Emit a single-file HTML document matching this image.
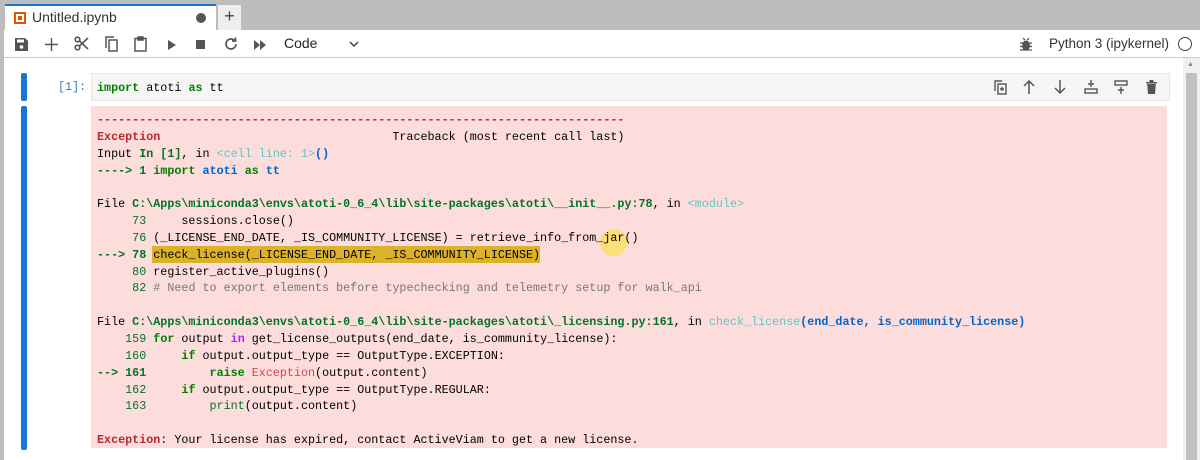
<!DOCTYPE html>
<html><head><meta charset="utf-8"><style>
*{margin:0;padding:0;box-sizing:border-box}
body{width:1200px;height:460px;overflow:hidden;background:#fff;font-family:"Liberation Sans",sans-serif;position:relative}
.abs{position:absolute}
.top{left:0;top:0;width:1200px;height:30px;background:#bdbdbd}
.leftstrip{left:0;top:0;width:4px;height:460px;background:#bdbdbd}
.tab{left:5px;top:4px;width:211px;height:27px;background:#fff;border-top:2px solid #1976d2}
.tab2{left:218px;top:5px;width:23px;height:25px;background:#eee;font-size:18px;color:#444;text-align:center;line-height:22px}
.toolbar{left:4px;top:30px;width:1196px;height:28px;background:#fff;border-bottom:1px solid #ccc}
.ico{position:absolute;color:#555}
.scroll{left:1183px;top:58px;width:17px;height:402px;background:#f0f0f0}
.scrollthumb{left:1186px;top:73px;width:11px;height:387px;background:#c1c1c1}
.bar{background:#1976d2;border-radius:2px;width:6px;left:21px}
pre{font-family:"Liberation Mono",monospace;font-size:11.73px;line-height:16.85px;color:#000;white-space:pre}
.r{color:#b22b31;font-weight:bold}
.g{color:#007427;font-weight:bold}
.gn{color:#007427}
.c{color:#60c6c8}
.b{color:#0065ca;font-weight:bold}
.k{color:#008000;font-weight:bold}
.p{color:#aa22ff;font-weight:bold}
.ex{color:#d44950}
.cm{color:#777}
.hl{background:#dcb22a}
</style></head><body>
<div class="abs top"></div>
<div class="abs leftstrip"></div>
<div class="abs tab">
 <div class="abs" style="left:9px;top:6px;width:12px;height:12px;border:2px solid #e65100;background:#fff"><div style="margin:2px;width:4px;height:4px;background:#e65100"></div></div>
 <div class="abs" style="left:27px;top:3px;font-size:14px;color:#333">Untitled.ipynb</div>
 <div class="abs" style="left:191px;top:7px;width:10px;height:10px;border-radius:50%;background:#555"></div>
</div>
<div class="abs tab2">+</div>
<div class="abs toolbar">
 <svg class="ico" style="left:11px;top:8px" width="13" height="13" viewBox="0 0 13 13"><path d="M0 0h10l3 3v10H0z" fill="#555"/><rect x="2" y="1.5" width="7" height="3" fill="#fff"/><circle cx="6.5" cy="9" r="1.8" fill="#fff"/></svg>
 <svg class="ico" style="left:41px;top:8px" width="13" height="13"><path d="M6.5 0v13M0 6.5h13" stroke="#555" stroke-width="1.4"/></svg>
 <svg class="ico" style="left:70px;top:6px" width="15" height="15" viewBox="0 0 15 15" fill="none" stroke="#555" stroke-width="1.6"><circle cx="3.5" cy="3.5" r="2.3"/><circle cx="3.5" cy="11.5" r="2.3"/><path d="M5.5 5L14 13M5.5 10L14 2"/></svg>
 <svg class="ico" style="left:101px;top:6px" width="14" height="16" viewBox="0 0 14 16" fill="none" stroke="#555" stroke-width="1.5"><path d="M1 12V1h8"/><rect x="4" y="4" width="8" height="11"/></svg>
 <svg class="ico" style="left:130px;top:6px" width="14" height="16" viewBox="0 0 14 16" fill="none" stroke="#555" stroke-width="1.5"><rect x="1" y="2.5" width="11" height="12.5"/><rect x="4" y="1" width="5" height="3" fill="#555"/></svg>
 <svg class="ico" style="left:164px;top:10px" width="9" height="10"><path d="M0 0l8 5-8 5z" fill="#555"/></svg>
 <div class="abs" style="left:192px;top:10px;width:9px;height:9px;background:#555"></div>
 <svg class="ico" style="left:220px;top:7px" width="14" height="14" viewBox="0 0 14 14" fill="none" stroke="#555" stroke-width="1.7"><path d="M12 7a5 5 0 1 1-1.5-3.6"/><path d="M11.5 0.5v3.5h-3.5" /></svg>
 <svg class="ico" style="left:250px;top:10px" width="13" height="10"><path d="M0 0l6 5-6 5zM6 0l6 5-6 5z" fill="#555"/></svg>
 <div class="abs" style="left:280px;top:5px;font-size:14px;color:#222">Code</div>
 <svg class="ico" style="left:345px;top:11px" width="10" height="7"><path d="M1 1l4 4 4-4" fill="none" stroke="#444" stroke-width="1.5"/></svg>
 <svg class="ico" style="left:1016px;top:8px" width="12" height="13" viewBox="0 0 12 13"><ellipse cx="6" cy="7.5" rx="4" ry="5" fill="#555"/><path d="M0 5h12M0 8.5h12M0 12h12M3 0l2 2M9 0L7 2" stroke="#555" stroke-width="1.3"/></svg>
 <div class="abs" style="left:1045px;top:6px;font-size:13.5px;color:#333">Python 3 (ipykernel)</div>
 <div class="abs" style="left:1174px;top:7px;width:14px;height:14px;border:1.5px solid #444;border-radius:50%"></div>
</div>
<div class="abs scroll"></div>
<div class="abs scrollthumb"></div>
<div class="abs" style="left:1187px;top:61px;font-size:7px;color:#888">▲</div>

<div class="abs bar" style="top:73px;height:28px"></div>
<div class="abs" style="left:58px;top:80px;font-family:'Liberation Mono',monospace;font-size:11.73px;color:#307fc1">[1]:</div>
<div class="abs" style="left:91px;top:73px;width:1079px;height:28px;background:#f5f5f5;border:1px solid #e6e6e6"></div>
<pre class="abs" style="left:97px;top:80px"><span class="k">import</span> atoti <span class="k">as</span> tt</pre>
<div class="abs" style="left:992px;top:79px;width:170px;height:16px;color:#555;font-size:15px">
 <svg class="abs" style="left:2px;top:1px" width="13" height="15" viewBox="0 0 13 15" fill="none" stroke="#555" stroke-width="1.4"><path d="M1 11V1h7"/><rect x="4" y="4" width="8" height="10"/><path d="M8 7v4M6 9h4"/></svg>
 <svg class="abs" style="left:31px;top:1px" width="12" height="14" viewBox="0 0 12 14" fill="none" stroke="#555" stroke-width="1.5"><path d="M6 14V1M1 6l5-5 5 5"/></svg>
 <svg class="abs" style="left:62px;top:1px" width="12" height="14" viewBox="0 0 12 14" fill="none" stroke="#555" stroke-width="1.5"><path d="M6 0v13M1 8l5 5 5-5"/></svg>
 <svg class="abs" style="left:92px;top:1px" width="14" height="14" viewBox="0 0 14 14" fill="none" stroke="#555" stroke-width="1.4"><rect x="1" y="9" width="12" height="4"/><path d="M7 0v7M4 4h6"/></svg>
 <svg class="abs" style="left:122px;top:1px" width="14" height="14" viewBox="0 0 14 14" fill="none" stroke="#555" stroke-width="1.4"><rect x="1" y="1" width="12" height="4"/><path d="M7 7v7M4 10h6"/></svg>
 <svg class="abs" style="left:154px;top:1px" width="11" height="14" viewBox="0 0 11 14"><path d="M0 2h11v1.5H0zM3.5 0h4v2h-4zM1.2 4h8.6l-.8 10H2z" fill="#555"/></svg>
</div>

<div class="abs bar" style="top:106px;height:344px"></div>
<div class="abs" style="left:91px;top:106px;width:1076px;height:342px;background:#fddcdc"></div>
<div class="abs hl" style="left:152px;top:246px;width:388px;height:17px"></div>
<div class="abs" style="left:600px;top:229px;width:27px;height:27px;border-radius:50%;background:rgba(250,225,90,.75)"></div>
<pre class="abs" style="left:97px;top:112px"><span class="r">---------------------------------------------------------------------------</span>
<span class="r">Exception</span>                                 Traceback (most recent call last)
Input <span class="g">In [1]</span>, in <span class="c">&lt;cell line: 1&gt;</span><span class="b">()</span>
<span class="g">----&gt; 1</span> <span class="k">import</span> <span class="b">atoti</span> <span class="k">as</span> <span class="b">tt</span>

File <span class="g">C:\Apps\miniconda3\envs\atoti-0_6_4\lib\site-packages\atoti\__init__.py:78</span>, in <span class="c">&lt;module&gt;</span>
<span class="gn">     73</span>     sessions.close()
<span class="gn">     76</span> (_LICENSE_END_DATE, _IS_COMMUNITY_LICENSE) = retrieve_info_from_jar()
<span class="g">---&gt; 78</span> <span class="hl">check_license(_LICENSE_END_DATE, _IS_COMMUNITY_LICENSE)</span>
<span class="gn">     80</span> register_active_plugins()
<span class="gn">     82</span> <span class="cm"># Need to export elements before typechecking and telemetry setup for walk_api</span>

File <span class="g">C:\Apps\miniconda3\envs\atoti-0_6_4\lib\site-packages\atoti\_licensing.py:161</span>, in <span class="c">check_license</span><span class="b">(end_date, is_community_license)</span>
<span class="gn">    159</span> <span class="k">for</span> output <span class="p">in</span> get_license_outputs(end_date, is_community_license):
<span class="gn">    160</span>     <span class="k">if</span> output.output_type == OutputType.EXCEPTION:
<span class="g">--&gt; 161</span>         <span class="k">raise</span> <span class="ex">Exception</span>(output.content)
<span class="gn">    162</span>     <span class="k">if</span> output.output_type == OutputType.REGULAR:
<span class="gn">    163</span>         <span class="gn">print</span>(output.content)

<span class="r">Exception</span>: Your license has expired, contact ActiveViam to get a new license.</pre>
</body></html>
